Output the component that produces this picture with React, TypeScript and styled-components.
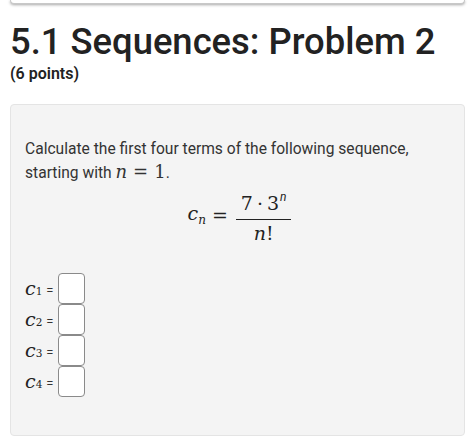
import React from 'react';
import styled, { createGlobalStyle } from 'styled-components';

const GlobalStyle = createGlobalStyle`
  html, body {
    margin: 0;
    padding: 0;
    background: #ffffff;
  }
  body {
    font-family: Roboto, "Liberation Sans", sans-serif;
    color: #222;
  }
`;

const Page = styled.div`
  width: 474px;
  height: 445px;
  overflow: hidden;
  padding: 0 9px 0 10px;
  box-sizing: border-box;
`;

const PrevCardEdge = styled.div`
  height: 3px;
  border: 1px solid #c8c8c8;
  border-top: none;
  border-radius: 0 0 4px 4px;
  background: #fff;
  box-shadow: 0 1px 3px rgba(0, 0, 0, 0.35);
`;

const Title = styled.h1`
  margin: 18px 0 0;
  font-size: 36.4px;
  font-weight: 500;
  line-height: 40px;
  color: #222;
`;

const Points = styled.div`
  margin-top: 2px;
  font-size: 16px;
  font-weight: 600;
  line-height: 20px;
  color: #222;
`;

const Card = styled.section`
  margin-top: 20px;
  background: #f4f4f4;
  border: 1px solid #e4e4e4;
  border-radius: 4px;
  padding: 32px 14px 38px;
`;

const Prompt = styled.p`
  margin: 0;
  font-size: 15.6px;
  line-height: 24px;
  color: #333;
`;

const mathFont = `"DejaVu Serif", "Liberation Serif", serif`;

const MathVar = styled.span<{ size?: number }>`
  font-family: ${mathFont};
  font-style: italic;
  font-size: ${p => p.size ?? 19}px;
  line-height: 1;
`;

const MathNum = styled.span<{ size?: number }>`
  font-family: ${mathFont};
  font-size: ${p => p.size ?? 19}px;
  line-height: 1;
`;

const MathOp = styled.span<{ size?: number }>`
  font-family: ${mathFont};
  font-size: ${p => p.size ?? 19}px;
  line-height: 1;
  margin: 0 6px;
`;

const Display = styled.div`
  display: flex;
  justify-content: center;
  align-items: center;
  margin: 2px 0 0;
  height: 56px;
  padding-left: 4px;
  color: #222;
`;

const Sub = styled.sub`
  font-size: 12px;
  vertical-align: -4px;
  font-style: italic;
`;

const Sup = styled.sup`
  font-size: 12px;
  vertical-align: 9px;
  font-style: italic;
  margin-left: 1px;
`;

const Fraction = styled.span`
  display: inline-flex;
  flex-direction: column;
  align-items: center;
  margin-left: 2px;
`;

const Numer = styled.span`
  padding: 0 5px 3px;
  border-bottom: 1.2px solid #222;
  line-height: 22px;
`;

const Denom = styled.span`
  padding-top: 4px;
  line-height: 20px;
`;

const Dot = styled.span`
  font-family: ${mathFont};
  font-size: 19px;
  margin: 0 4px;
`;

const Answers = styled.div`
  margin-top: 30px;
  display: flex;
  flex-direction: column;
`;

const AnswerRow = styled.div`
  display: flex;
  align-items: center;
  height: 31px;
`;

const Label = styled.span`
  width: 31px;
  display: inline-flex;
  align-items: baseline;
  color: #222;
`;

const Eq = styled.span`
  font-family: Roboto, sans-serif;
  font-size: 13px;
  margin-left: 4px;
  color: #333;
`;

const Box = styled.div`
  width: 25px;
  height: 29px;
  margin-left: 2px;
  background: #fff;
  border: 1px solid #8a8a8a;
  border-radius: 4px;
`;

const LabelSub = styled.sub`
  font-family: ${mathFont};
  font-size: 10.5px;
  vertical-align: -5px;
  line-height: 1;
`;

const terms = [1, 2, 3, 4];

export default function App() {
  return (
    <>
      <GlobalStyle />
      <Page>
        <PrevCardEdge />
        <Title>5.1 Sequences: Problem 2</Title>
        <Points>(6 points)</Points>
        <Card>
          <Prompt>
            Calculate the first four terms of the following sequence, starting with{' '}
            <MathVar size={18}>n</MathVar>
            <MathOp size={18}>=</MathOp>
            <MathNum size={18}>1</MathNum>.
          </Prompt>
          <Display>
            <MathVar>
              c<Sub>n</Sub>
            </MathVar>
            <MathOp>=</MathOp>
            <Fraction>
              <Numer>
                <MathNum>7</MathNum>
                <Dot>·</Dot>
                <MathNum>3</MathNum>
                <Sup>n</Sup>
              </Numer>
              <Denom>
                <MathVar>n</MathVar>
                <MathNum>!</MathNum>
              </Denom>
            </Fraction>
          </Display>
          <Answers>
            {terms.map(t => (
              <AnswerRow key={t}>
                <Label>
                  <MathVar size={19}>c</MathVar>
                  <LabelSub>{t}</LabelSub>
                  <Eq>=</Eq>
                </Label>
                <Box />
              </AnswerRow>
            ))}
          </Answers>
        </Card>
      </Page>
    </>
  );
}
